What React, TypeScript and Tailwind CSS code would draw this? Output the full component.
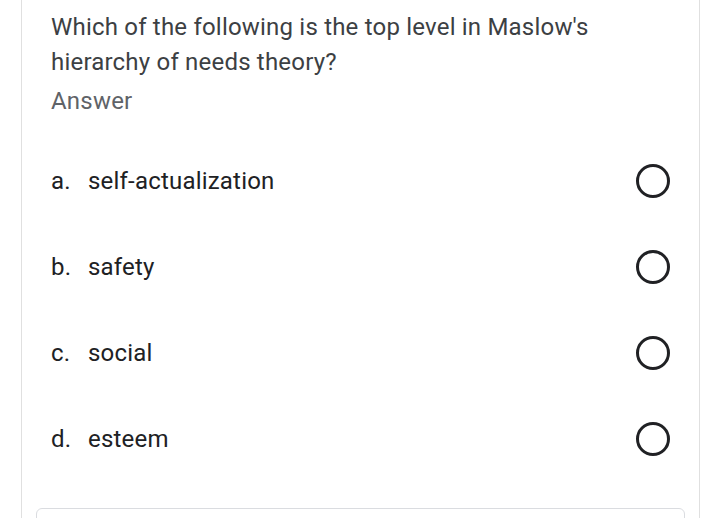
const OPTIONS = [
  { letter: 'a.', label: 'self-actualization' },
  { letter: 'b.', label: 'safety' },
  { letter: 'c.', label: 'social' },
  { letter: 'd.', label: 'esteem' },
]

export default function App() {
  return (
    <div className="h-[518px] w-[720px] overflow-hidden bg-white font-['Roboto',sans-serif] tracking-[0.2px]">
      <div className="ml-[21px] w-[679px] border-x border-[#e0e0e0] pt-[10px]">
        <div className="pl-[29px] pr-[29px]">
          <p className="text-[24px] leading-[35px] text-[#3c4043]">
            Which of the following is the top level in Maslow's hierarchy of needs theory?
          </p>
          <p className="mt-[4px] text-[24px] leading-[35px] text-[#5f6368]">Answer</p>

          <div className="mt-[19px] flex flex-col">
            {OPTIONS.map((o) => (
              <div key={o.letter} className="flex h-[86px] items-center justify-between">
                <div className="flex items-center text-[24px] text-[#202124]">
                  <span className="w-[37px]">{o.letter}</span>
                  <span>{o.label}</span>
                </div>
                <span className="h-[34px] w-[34px] rounded-full border-[3px] border-[#202124]" />
              </div>
            ))}
          </div>
        </div>

        <div className="mx-[14px] mt-[26px] h-[40px] rounded-[6px] border border-[#dadce0]" />
      </div>
    </div>
  )
}
